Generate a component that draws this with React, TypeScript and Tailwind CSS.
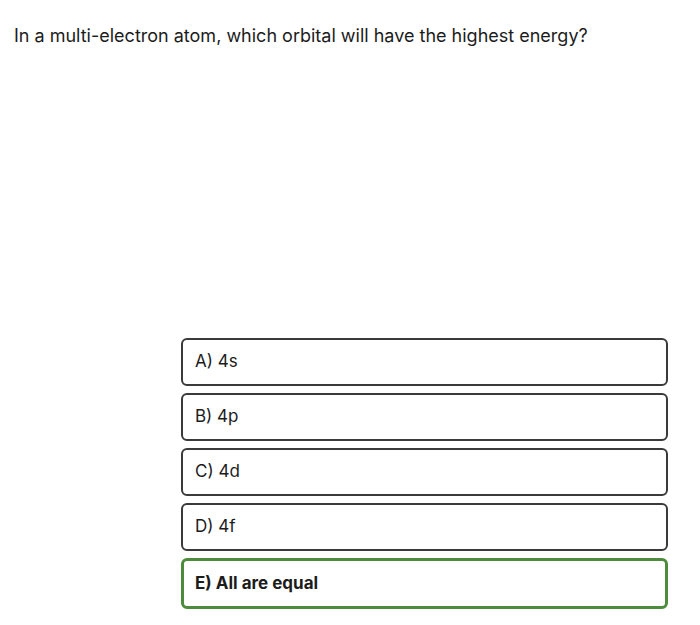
import React from 'react';

const options = ['A) 4s', 'B) 4p', 'C) 4d', 'D) 4f'];

export default function App() {
  return (
    <div className="w-[700px] h-[625px] bg-white font-['Inter',sans-serif] text-[#1c1c1c]">
      <h1 className="pt-[24px] pl-[14px] text-[18px] leading-[24px] font-normal">
        In a multi-electron atom, which orbital will have the highest energy?
      </h1>
      <div className="ml-[181px] mt-[290px] w-[487px] flex flex-col gap-[7px]">
        {options.map((o) => (
          <div
            key={o}
            className="h-[48px] border-2 border-[#3a3a3a] rounded-[6px] flex items-center pl-[12px] text-[17px]"
          >
            {o}
          </div>
        ))}
        <div className="h-[51px] border-[3px] border-[#4d8c3c] rounded-[6px] flex items-center pl-[11px] text-[17px] font-bold">
          E) All are equal
        </div>
      </div>
    </div>
  );
}
